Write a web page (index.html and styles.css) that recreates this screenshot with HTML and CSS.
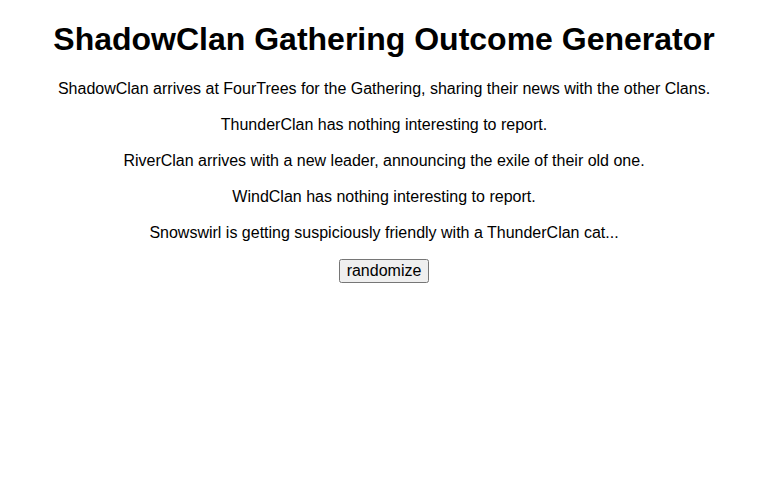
FILE: index.html
```html
<!DOCTYPE html>
<html lang="en">
<head>
    <meta charset="UTF-8">
    <meta name="viewport" content="width=device-width, initial-scale=1.0">
    <title>ShadowClan Gathering Outcome Generator</title>
    <link rel="stylesheet" href="styles.css">
</head>
<body>
<h1>ShadowClan Gathering Outcome Generator</h1>
<p id="shadow">ShadowClan arrives at FourTrees for the Gathering, sharing their news with the other Clans.</p>
<p id="thunder">ThunderClan has nothing interesting to report.</p>
<p id="river">RiverClan arrives with a new leader, announcing the exile of their old one.</p>
<p id="wind">WindClan has nothing interesting to report.</p>
<p id="extra">Snowswirl is getting suspiciously friendly with a ThunderClan cat...</p>
<button class="randomize">randomize</button>
</body>
</html>
```

FILE: styles.css
```css
body {
    font-family: "Liberation Sans", Arial, sans-serif;
    text-align: center;
    color: #000;
}
h1 {
    margin: 13.44px 0 20.44px;
}
p {
    line-height: 20px;
}
.randomize {
    font-family: "Liberation Sans", Arial, sans-serif;
    font-size: 16px;
}
```
